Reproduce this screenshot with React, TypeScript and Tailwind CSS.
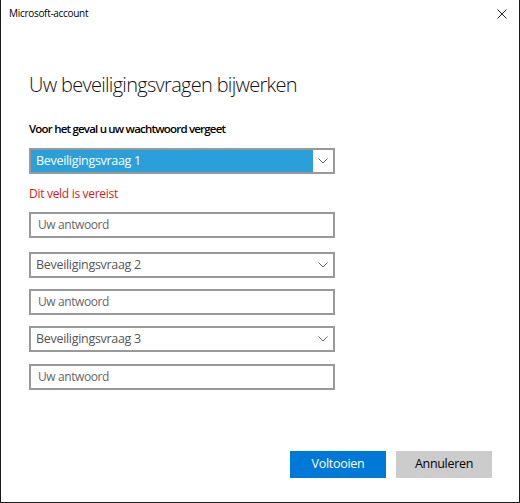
import React from 'react'

const font = { fontFamily: '"Open Sans", "Noto Sans", sans-serif' }

const Chevron: React.FC = () => (
  <svg className="h-[6px] w-[10px]" viewBox="0 0 10 6" fill="none" stroke="#666" strokeWidth={1}>
    <path d="M0.5 0.5 L5 5 L9.5 0.5" />
  </svg>
)

const Select: React.FC<{ label: string; active?: boolean }> = ({ label, active }) => (
  <div className="flex h-[26px] w-[306px] border-2 border-[#999999] bg-white">
    <div
      className={
        active
          ? 'flex flex-1 items-center bg-[#2b9fd9] pl-[5px] text-[12.5px] tracking-[-0.3px] text-white'
          : 'flex flex-1 items-center pl-[5px] text-[12.5px] tracking-[-0.3px] text-[#555555]'
      }
    >
      {label}
    </div>
    <div className="flex w-[20px] items-center justify-center bg-white">
      <Chevron />
    </div>
  </div>
)

const Answer: React.FC<{ className?: string }> = ({ className }) => (
  <div
    className={`flex h-[26px] w-[306px] items-center border-2 border-[#999999] bg-white pl-[7px] text-[12px] tracking-[-0.4px] text-[#666666] ${className ?? ''}`}
  >
    Uw antwoord
  </div>
)

export default function App() {
  return (
    <div
      className="relative flex h-[503px] w-[520px] flex-col border-x border-b border-[#1a1a1a] bg-white text-[#1a1a1a]"
      style={font}
    >
      {/* title bar */}
      <div className="flex h-[27px] items-center justify-between pl-[8px] pr-[12px]">
        <span className="text-[10px] tracking-[-0.3px] text-black">Microsoft-account</span>
        <svg className="h-[10px] w-[10px]" viewBox="0 0 10 10" stroke="#222" strokeWidth={1}>
          <path d="M0.5 0.5 L9.5 9.5 M9.5 0.5 L0.5 9.5" />
        </svg>
      </div>

      <div className="flex flex-col pl-[28px]">
        <h1 className="mt-[44px] text-[20px] leading-[28px] font-light tracking-[-0.7px] text-[#111111]">
          Uw beveiligingsvragen bijwerken
        </h1>
        <p className="mt-[21px] text-[11.5px] leading-[18px] font-semibold tracking-[-0.8px] text-black">
          Voor het geval u uw wachtwoord vergeet
        </p>
        <div className="mt-[10px]">
          <Select label="Beveiligingsvraag 1" active />
        </div>
        <p className="mt-[11px] text-[12px] leading-[18px] tracking-[-0.3px] text-[#d41c24]">Dit veld is vereist</p>
        <div className="mt-[9px] flex flex-col">
          <Answer />
          <div className="mt-[14px]">
            <Select label="Beveiligingsvraag 2" />
          </div>
          <Answer className="mt-[11px]" />
          <div className="mt-[11px]">
            <Select label="Beveiligingsvraag 3" />
          </div>
          <Answer className="mt-[12px]" />
        </div>
      </div>

      <div className="mt-auto mb-[24px] flex justify-end gap-[10px] pr-[27px]">
        <button className="h-[27px] w-[96px] bg-[#0078d7] text-[12.5px] tracking-[-0.3px] text-white">Voltooien</button>
        <button className="h-[27px] w-[96px] bg-[#cccccc] text-[12.5px] tracking-[-0.3px] text-black">Annuleren</button>
      </div>
    </div>
  )
}
